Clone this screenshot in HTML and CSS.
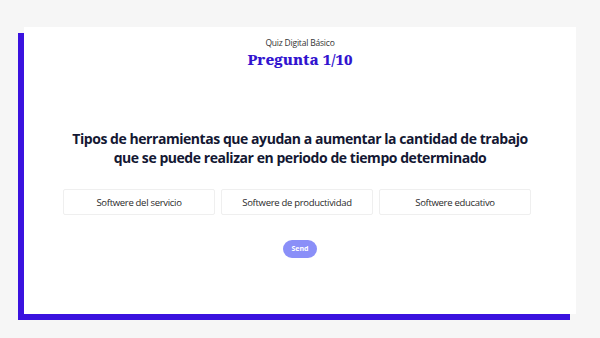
FILE: index.html
```html
<!DOCTYPE html>
<html lang="es">
<head>
<meta charset="utf-8">
<link rel="stylesheet" href="styles.css">
</head>
<body>
<main class="card">
  <header class="head">
    <p class="sub">Quiz Digital Básico</p>
    <h1 class="title">Pregunta 1/10</h1>
  </header>
  <h2 class="question">Tipos de herramientas que ayudan a aumentar la cantidad de trabajo<br>que se puede realizar en periodo de tiempo determinado</h2>
  <div class="options">
    <button class="opt">Softwere del servicio</button>
    <button class="opt">Softwere de productividad</button>
    <button class="opt">Softwere educativo</button>
  </div>
  <div class="actions"><button class="send">Send</button></div>
</main>
</body>
</html>
```
FILE: styles.css
```css
html, body { margin: 0; padding: 0; }
body {
  background: #f6f6f6;
  width: 600px;
  height: 338px;
  overflow: hidden;
  font-family: "Open Sans", "Noto Sans", sans-serif;
}
.card {
  margin: 27px 0 0 24px;
  width: 552px;
  height: 287px;
  background: #fff;
  box-shadow: -6px 6px 0 #3a12df;
  display: flex;
  flex-direction: column;
  align-items: center;
  box-sizing: border-box;
  padding-top: 10px;
}
.head { text-align: center; }
.sub {
  margin: 0;
  font-size: 8.5px;
  line-height: 12px;
  color: #333;
  letter-spacing: -0.2px;
}
.title {
  margin: 0;
  font-family: "Noto Serif", "Liberation Serif", serif;
  font-weight: 800;
  font-size: 15px;
  line-height: 20px;
  color: #3214cf;
}
.question {
  margin: 60px 0 0;
  text-align: center;
  font-family: "Open Sans", sans-serif;
  font-weight: 700;
  font-size: 14px;
  line-height: 19px;
  color: #141833;
  letter-spacing: -0.45px;
}
.options {
  margin-top: 22px;
  margin-right: 6px;
  display: flex;
  gap: 6px;
}
.opt {
  width: 152px;
  height: 26px;
  background: #fff;
  border: 1px solid #efefef;
  border-radius: 2px;
  font-family: "Open Sans", sans-serif;
  font-size: 9.5px;
  color: #2a2a2a;
  letter-spacing: -0.3px;
  padding: 0;
}
.actions { margin-top: 19px; }
.send {
  width: 34px;
  height: 18px;
  border: none;
  border-radius: 9px;
  background: #8a8ff8;
  color: #fff;
  font-family: "Open Sans", sans-serif;
  font-weight: 700;
  font-size: 7px;
  padding: 0;
}
```
